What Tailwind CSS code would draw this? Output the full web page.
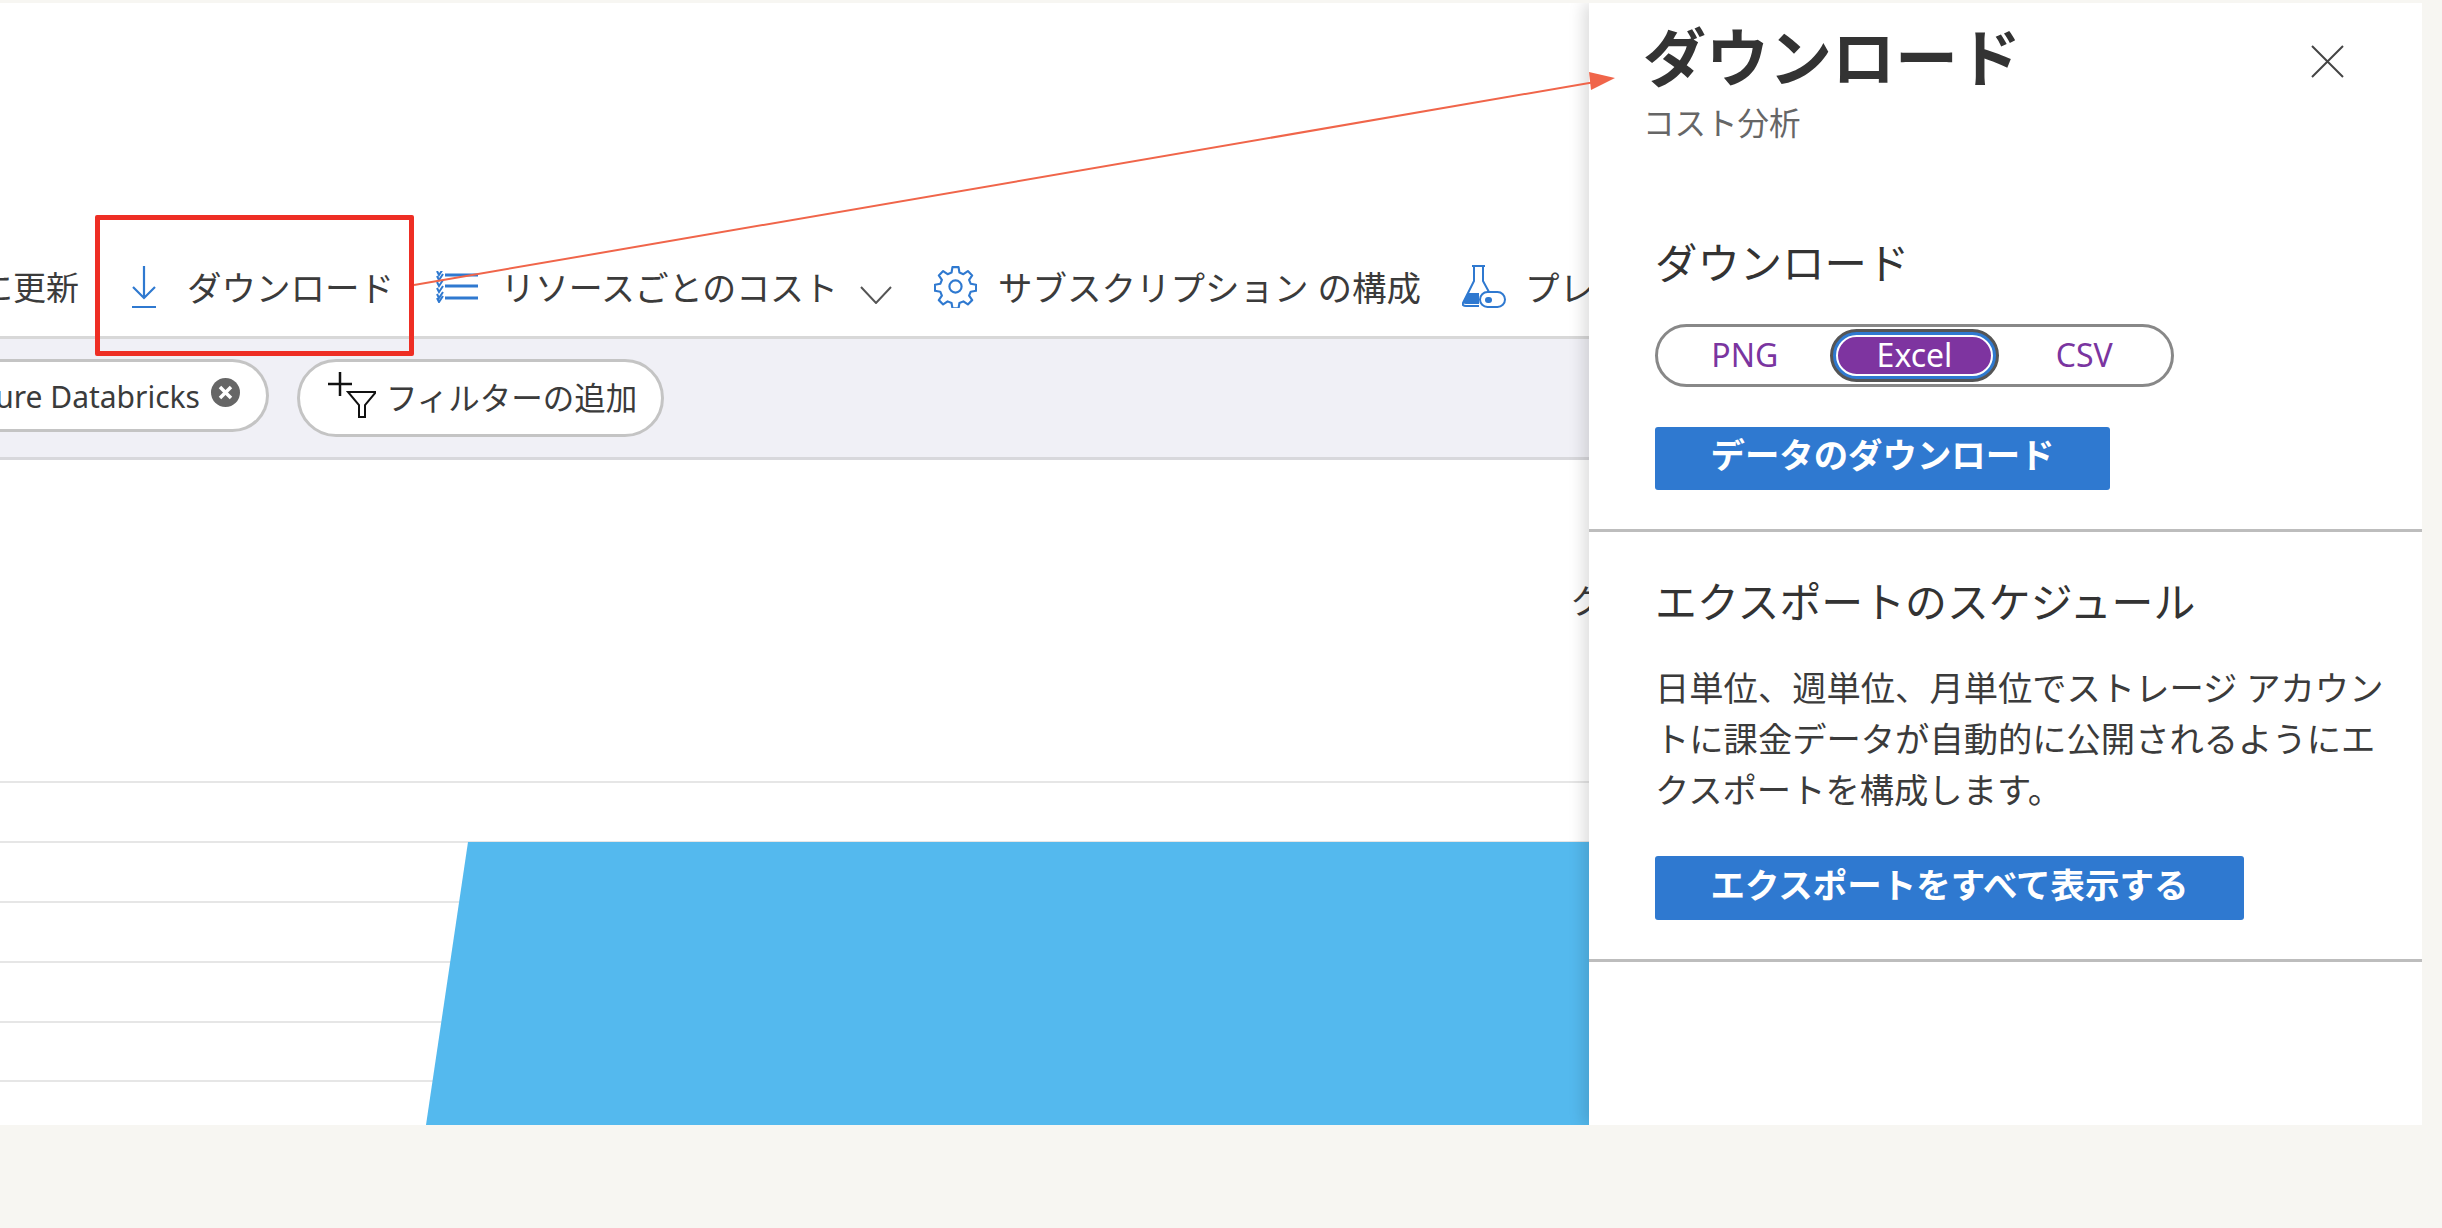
<!DOCTYPE html>
<html lang="ja">
<head>
<meta charset="utf-8">
<script src="https://cdn.jsdelivr.net/npm/@tailwindcss/browser@4"></script>
</head>
<body class="bg-[#f7f6f2] m-0 overflow-hidden font-['Noto_Sans','Noto_Sans_CJK_JP',sans-serif] text-[#333]">
<div class="relative w-[2422px] h-[1122px] mt-[3px] bg-white overflow-hidden">
  <!-- page -->
  <div class="flex flex-col w-full h-full">
    <div class="h-[336px] shrink-0 border-b-[3px] border-[#d8d8d8] flex items-start pt-[265px] whitespace-nowrap text-[34.5px] leading-[40px] text-[#3b3b3b] ml-[-193px]">
      <span class="text-[33px] w-[272px] shrink-0 text-right">最新の情報に更新</span>
      <svg class="ml-[53px] shrink-0 w-[24px] h-[42px] mt-[-2px]" viewBox="0 0 24 42" fill="none" stroke="#2f79d0" stroke-width="2.2"><path d="M12 0V32M1 21L12 32L23 21M0 41H24"/></svg>
      <span class="ml-[31px] w-[249px] shrink-0">ダウンロード</span>
      <svg class="shrink-0 w-[42px] h-[32px] mt-[3px]" viewBox="0 0 42 32" fill="none" stroke="#2f79d0" stroke-width="3"><path d="M9 4H42M9 15H42M9 27H42"/><path stroke-width="2" d="M1 0L3 4L7 -2M1 5L3 9L7 3M1 11L3 15L7 9M1 17L3 21L7 15M1 23L3 27L7 21M1 27L3 31L7 25"/></svg>
      <span class="ml-[23px] shrink-0 w-[337px] text-[33.9px]">リソースごとのコスト</span>
      <svg class="ml-[22px] shrink-0 w-[32px] h-[18px] mt-[18px]" viewBox="0 0 32 18" fill="none" stroke="#555" stroke-width="2"><path d="M1 1L16 17L31 1"/></svg>
      <svg class="ml-[42px] shrink-0 w-[43px] h-[43px] mt-[-3px]" viewBox="0 0 24 24" fill="none" stroke="#2f79d0" stroke-width="1.2" stroke-linejoin="round"><circle cx="12" cy="12" r="3.4"/><path d="M10.3 1.2h3.4l.5 3 2.2.9 2.5-1.7 2.4 2.4-1.7 2.5.9 2.2 3 .5v3.4l-3 .5-.9 2.2 1.7 2.5-2.4 2.4-2.5-1.7-2.2.9-.5 3h-3.4l-.5-3-2.2-.9-2.5 1.7-2.4-2.4 1.7-2.5-.9-2.2-3-.5v-3.4l3-.5.9-2.2-1.7-2.5 2.4-2.4 2.5 1.7 2.2-.9z"/></svg>
      <span class="ml-[21px] shrink-0 w-[422px]">サブスクリプション の構成</span>
      <svg class="ml-[42px] shrink-0 w-[44px] h-[43px] mt-[-3px]" viewBox="0 0 44 43" fill="none" stroke="#2f79d0" stroke-width="2"><path d="M10 1H23M12 1V16L1 38Q0 41 4 41H17M21 1V16L27 27"/><path fill="#2f79d0" stroke="none" d="M6 28H17V39H4Q0 39 2 35Z"/><rect x="18" y="27" width="25" height="15" rx="7.5" fill="#fff"/><rect x="23" y="32" width="7" height="6" rx="3" fill="#2f79d0" stroke="none"/></svg>
      <span class="ml-[19px] shrink-0">プレビュー</span>
    </div>
    <div class="h-[121px] shrink-0 bg-[#f0f0f6] border-b-[3px] border-[#d8d8dc] flex items-start pt-[20px] whitespace-nowrap text-[#3b3b3b]">
      <div class="w-[269px] h-[73px] shrink-0 bg-white border-[3px] border-l-0 border-[#c4c4c4] rounded-r-[37px] flex items-center justify-end pr-[26px] overflow-hidden">
        <span class="text-[30px] leading-[40px] mr-[11px] mt-[2px]">Azure Databricks</span>
        <svg class="shrink-0 w-[29px] h-[29px] mt-[-6px]" viewBox="0 0 29 29"><circle cx="14.5" cy="14.5" r="14.5" fill="#666"/><path d="M9 9L20 20M20 9L9 20" stroke="#fff" stroke-width="3.5"/></svg>
      </div>
      <div class="ml-[28px] w-[367px] h-[78px] shrink-0 bg-white border-[3px] border-[#c4c4c4] rounded-[39px] flex items-center pl-[28px]">
        <svg class="shrink-0 w-[48px] h-[46px] mt-[-6px]" viewBox="0 0 48 46" fill="none" stroke="#111" stroke-width="2.5"><path d="M12 0V24M0 12H24"/><path stroke-width="2" d="M20 20H48L37 33V45H31V33Z"/></svg>
        <span class="ml-[10px] text-[31.5px] leading-[40px]">フィルターの追加</span>
      </div>
    </div>
    <div class="flex-1"></div>
  </div>

  <!-- chart over the page's lower area -->
  <div class="absolute left-0 top-[778px] w-full h-[344px]">
    <div class="absolute left-0 right-0 top-[0px] h-[2px] bg-[#e6e6e6]"></div>
    <div class="absolute left-0 right-0 top-[60px] h-[2px] bg-[#e6e6e6]"></div>
    <div class="absolute left-0 right-0 top-[120px] h-[2px] bg-[#e6e6e6]"></div>
    <div class="absolute left-0 right-0 top-[180px] h-[2px] bg-[#e6e6e6]"></div>
    <div class="absolute left-0 right-0 top-[240px] h-[2px] bg-[#e6e6e6]"></div>
    <div class="absolute left-0 right-0 top-[299px] h-[2px] bg-[#e6e6e6]"></div>
    <svg class="absolute left-0 top-0 w-[1600px] h-[344px]" viewBox="0 0 1600 344"><path d="M468 61H1600V344H426Z" fill="#54b9ee"/></svg>
  </div>
  <span class="absolute left-[1570px] top-[578px] text-[34px] leading-[40px] text-[#3b3b3b]">ク</span>

  <!-- red annotation box -->
  <div class="absolute left-[95px] top-[212px] w-[319px] h-[141px] border-[5px] border-[#ee2e24] rounded-[2px]"></div>

  <!-- side panel -->
  <aside class="absolute left-[1589px] top-0 w-[833px] h-full bg-white shadow-[-6px_0_14px_rgba(0,0,0,0.13)] flex flex-col">
    <header class="h-[168px] shrink-0 pl-[54px] pr-[78px] flex justify-between items-start">
      <div class="flex flex-col">
        <h1 class="text-[63px] leading-[76px] font-bold text-[#333] mt-[16px]">ダウンロード</h1>
        <p class="text-[31.5px] leading-[40px] text-[#666] mt-[8px]">コスト分析</p>
      </div>
      <svg class="w-[33px] h-[33px] mt-[42px]" viewBox="0 0 33 33" fill="none" stroke="#444" stroke-width="2"><path d="M1 1L32 32M32 1L1 32"/></svg>
    </header>
    <section class="h-[361px] shrink-0 border-b-[3px] border-[#bdbdbd] pl-[66px] flex flex-col items-start">
      <h2 class="text-[42.4px] leading-[56px] text-[#333] mt-[64px] font-normal">ダウンロード</h2>
      <div class="mt-[33px] w-[519px] h-[63px] border-[3px] border-[#888] rounded-full grid grid-cols-3 items-center px-[2px] text-[32px] leading-[40px] text-[#7a35a0]">
        <span class="text-center pb-[2px]">PNG</span>
        <span class="h-[53px] rounded-full border-[3px] border-[#555] bg-[#2f79d0] p-[3px]">
          <span class="flex h-full items-center justify-center rounded-full bg-[#7e34a0] border-2 border-white text-white pb-[2px]">Excel</span>
        </span>
        <span class="text-center pb-[2px]">CSV</span>
      </div>
      <button class="mt-[40px] w-[455px] h-[63px] bg-[#2f79d0] rounded-[3px] text-white text-[34.4px] font-bold leading-[40px] pb-[8px]">データのダウンロード</button>
    </section>
    <section class="h-[430px] shrink-0 border-b-[3px] border-[#bdbdbd] pl-[66px] flex flex-col items-start">
      <h2 class="text-[41.9px] leading-[56px] text-[#333] mt-[42px] font-normal">エクスポートのスケジュール</h2>
      <p class="text-[34.3px] leading-[51px] text-[#3b3b3b] w-[745px] mt-[32px]">日単位、週単位、月単位でストレージ アカウントに課金データが自動的に公開されるようにエクスポートを構成します。</p>
      <button class="mt-[41px] w-[589px] h-[64px] bg-[#2f79d0] rounded-[3px] text-white text-[34.5px] font-bold leading-[40px] pb-[6px]">エクスポートをすべて表示する</button>
    </section>
  </aside>

  <!-- arrow -->
  <svg class="absolute left-0 top-0 w-[1640px] h-[320px]" viewBox="0 0 1640 320" fill="none"><path d="M414 282L1595 79" stroke="#f0654a" stroke-width="2"/><path d="M1615 75L1589 69L1591 87Z" fill="#f0654a"/></svg>
</div>
</body>
</html>
